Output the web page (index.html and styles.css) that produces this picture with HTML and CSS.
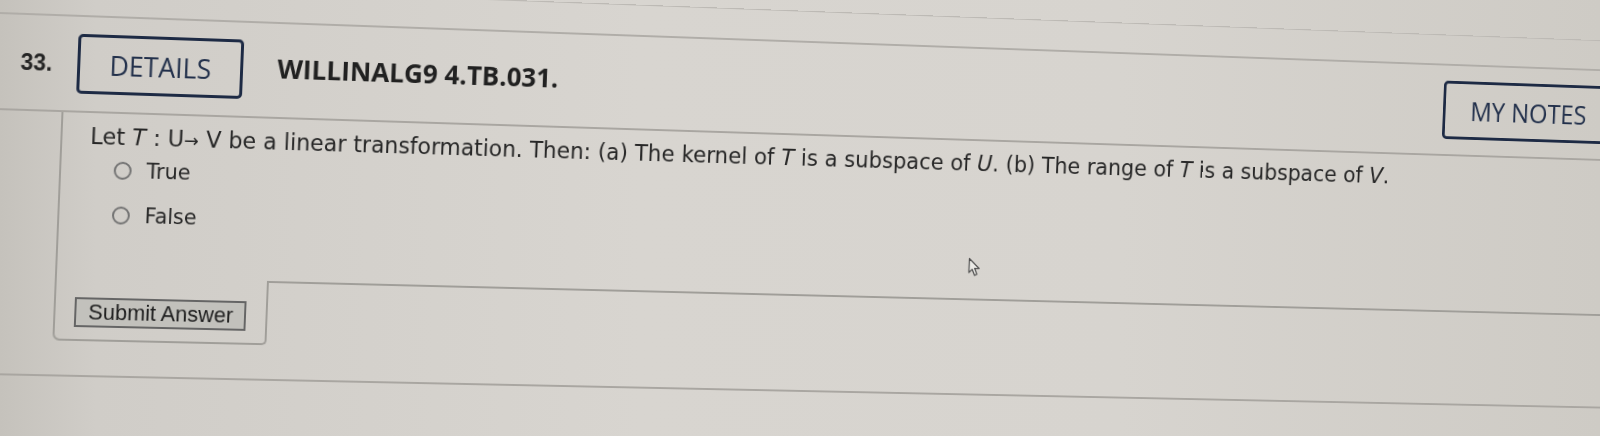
FILE: index.html
```html
<!DOCTYPE html>
<html lang="en">
<head>
<meta charset="utf-8">
<title>Question 33</title>
<link rel="stylesheet" href="styles.css">
</head>
<body>
<div class="screen">
  <div class="prevline"></div>
  <div class="topline"></div>
  <div class="qhead">
    <span class="qnum">33.</span>
    <div class="details">DETAILS</div>
    <span class="qtitle">WILLINALG9 4.TB.031.</span>
    <div class="notes">MY NOTES</div>
  </div>
  <div class="divider"></div>
  <div class="qbody">
    <p class="stem">Let <i>T</i> : U<span class="arrow">→</span> V be a linear transformation. Then: (a) The kernel of <i>T</i> is a subspace of <i>U</i>. (b) The range of <i>T</i> is a subspace of <i>V</i>.</p>
    <div class="choices">
      <label class="choice"><span class="radio"></span>True</label>
      <label class="choice"><span class="radio"></span>False</label>
    </div>
  </div>
  <div class="qfoot">
    <div class="submit-area"><button class="submit" type="button">Submit Answer</button></div>
    <div class="filler"></div>
  </div>
  <div class="bottomline"></div>
  <svg class="cursor" width="15" height="21" viewBox="0 0 15 21" aria-hidden="true">
    <path d="M1.5 1.5 L1.5 16 L5 12.6 L7.6 18.8 L10.2 17.7 L7.6 11.6 L12.4 11.6 Z" fill="#ecebe7" stroke="#505050" stroke-width="1.3" stroke-linejoin="round"/>
  </svg>
</div>
</body>
</html>
```

FILE: styles.css
```css
html, body {
  margin: 0;
  padding: 0;
  overflow: hidden;
}
body {
  width: 1600px;
  height: 436px;
  background: linear-gradient(90deg, #c5c2bc 0%, #d0cdc8 6%, #d8d5d0 40%, #d7d4cf 70%, #cecbc5 100%);
}
.screen {
  position: relative;
  width: 1740px;
  height: 480px;
  margin-top: -20px;
  transform-origin: 0 20px;
  transform: matrix3d(1, 0.0362, 0, 0.0000413, -0.04, 1, 0, 0, 0, 0, 1, 0, 0, 0, 0, 1);
}
.prevline {
  margin-top: 1px;
  border-top: 1px solid #bdbab5;
}
.topline {
  margin-top: 30px;
  border-top: 2px solid #b0ada8;
}
.qhead {
  display: flex;
  align-items: center;
  height: 94px;
  padding: 0 3px 0 23px;
}
.qnum {
  font: bold 23px "Liberation Sans", Arial, sans-serif;
  color: #242424;
}
.details {
  margin-left: 25px;
  width: 168px;
  height: 60px;
  box-sizing: border-box;
  border: 3px solid #1d2a44;
  border-radius: 5px;
  display: flex;
  align-items: center;
  justify-content: center;
  font: 27px "Open Sans", sans-serif;
  color: #22304b;
}
.qtitle {
  margin: 0 0 6px 35px;
  font: 700 27px "Open Sans", sans-serif;
  color: #212121;
}
.notes {
  margin-left: auto;
  width: 200px;
  height: 62px;
  box-sizing: border-box;
  border: 3px solid #1d2a44;
  border-radius: 5px;
  display: flex;
  align-items: center;
  padding-left: 28px;
  font: 27px "Open Sans", sans-serif;
  color: #22304b;
}
.divider {
  border-top: 2px solid #a9a6a1;
}
.qbody {
  margin-left: 66px;
  border-left: 2px solid #a09e99;
  padding: 10px 0 50px 28px;
}
.stem {
  margin: 0;
  font: 22.7px/26px "DejaVu Sans", Verdana, sans-serif;
  color: #272727;
  white-space: nowrap;
}
.stem i {
  font-style: italic;
}
.arrow {
  font-size: 18px;
}
.choices {
  margin: 7px 0 0 25px;
  display: flex;
  flex-direction: column;
  gap: 21px;
}
.choice {
  display: flex;
  align-items: center;
  height: 24px;
  font: 21px/24px "DejaVu Sans", Verdana, sans-serif;
  color: #272727;
}
.radio {
  width: 18px;
  height: 18px;
  box-sizing: border-box;
  border: 2px solid #737373;
  border-radius: 50%;
  margin-right: 15px;
}
.qfoot {
  display: flex;
  margin-left: 66px;
}
.submit-area {
  width: 217px;
  box-sizing: border-box;
  border: 2px solid #a09e99;
  border-top: none;
  border-radius: 0 0 5px 7px;
  padding: 21px 0 12px 19px;
}
.submit {
  display: block;
  width: 174px;
  height: 30px;
  box-sizing: border-box;
  margin: 0;
  padding: 0 0 0 12px;
  text-align: left;
  background: #c2c1bc;
  border: 2px solid #656565;
  border-radius: 0;
  font: 22px/26px "Liberation Sans", Arial, sans-serif;
  color: #202020;
}
.filler {
  flex: 1;
  border-top: 2px solid #a09e99;
}
.bottomline {
  margin-top: 34px;
  border-top: 2px solid #a9a6a1;
}
.cursor {
  position: absolute;
  left: 1018px;
  top: 250px;
}
```
